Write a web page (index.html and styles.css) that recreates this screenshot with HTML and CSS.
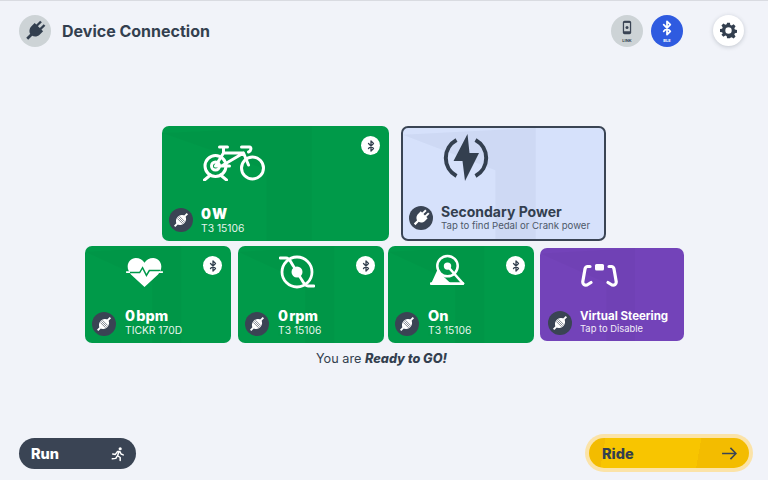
FILE: index.html
```html
<!DOCTYPE html>
<html lang="en">
<head>
<meta charset="utf-8">
<title>Device Connection</title>
<link rel="stylesheet" href="styles.css">
</head>
<body>
<svg class="defs" width="0" height="0" aria-hidden="true">
  <symbol id="bt" viewBox="0 0 24 24"><path d="M7 7l10 10-5 5V2l5 5L7 17" fill="none" stroke="currentColor" stroke-width="2.6" stroke-linejoin="round" stroke-linecap="round"/></symbol>
  <symbol id="plug" viewBox="0 0 24 24">
    <g transform="rotate(45 12 12)" fill="currentColor">
      <rect x="10.700" y="0" width="2.600" height="6"/>
      <rect x="10.700" y="18" width="2.600" height="6"/>
      <ellipse cx="12" cy="12" rx="6" ry="7.500"/>
      <path d="M7 10h10M7 12h10M7 14h10" stroke="#3a4454" stroke-width=".8"/>
    </g>
  </symbol>
  <symbol id="plug-open" viewBox="0 0 24 24">
    <g transform="rotate(45 12 12)" fill="currentColor">
      <rect x="8" y="0" width="2.600" height="7"/>
      <rect x="13.400" y="0" width="2.600" height="7"/>
      <path d="M5.500 6h13v5c0 4-3 6.500-5 6.800V24h-3v-6.200c-2-.3-5-2.800-5-6.800z"/>
    </g>
  </symbol>
</svg>

<header class="topbar">
  <div class="title-group">
    <span class="avatar grey"><svg class="i22 dark"><use href="#plug-open"/></svg></span>
    <h1 class="title">Device Connection</h1>
  </div>
  <div class="actions">
    <span class="mode grey">
      <svg class="phone" viewBox="0 0 12 18"><rect x="1" y="1" width="10" height="16" rx="2" fill="#3a4454"/><rect x="2.500" y="3.500" width="7" height="10" fill="#cdd3d6"/><circle cx="6" cy="9" r="1.800" fill="#3a4454"/></svg>
      <span class="mode-label dark">LINK</span>
    </span>
    <span class="mode blue">
      <svg class="i16 white"><use href="#bt"/></svg>
      <span class="mode-label white">BLE</span>
    </span>
    <span class="gear-btn">
      <svg class="gear" viewBox="0 0 24 24"><path fill="#333f4f" fill-rule="evenodd" d="M10 1h4l.6 3.200 1.900.8 2.700-1.800 2.800 2.800-1.800 2.700.8 1.900 3 .6v4l-3 .6-.8 1.900 1.800 2.700-2.800 2.800-2.700-1.800-1.900.8L14 23h-4l-.6-3.200-1.900-.8-2.700 1.800-2.800-2.800L3.800 16.300 3 14.400 0 14v-4l3-.6.800-1.900L2 4.800 4.800 2l2.700 1.800 1.900-.8zM12 7.500a4.500 4.500 0 1 0 0 9 4.500 4.500 0 0 0 0-9z"/></svg>
    </span>
  </div>
</header>

<main class="board">
  <div class="row row-top">
    <article class="card green wide">
      <span class="bt-badge"><svg class="i12"><use href="#bt"/></svg></span>
      <svg class="sensor bike" viewBox="0 0 64 36" fill="none" stroke="#fff" stroke-width="3" stroke-linecap="round" stroke-linejoin="round">
        <circle cx="14" cy="21" r="10.500"/><circle cx="14" cy="21" r="4"/>
        <circle cx="51" cy="23" r="11"/>
        <path d="M3 35l6-5M25 35l-6-5M14 21L22 8h20l5 12M20 21l22-13M14 21h14M18 2h8M22 2v6M40 2h8c2 0 2 4-1 5"/>
      </svg>
      <div class="status">
        <span class="plug-badge"><svg class="i18"><use href="#plug"/></svg></span>
        <div class="status-text"><strong class="value heavy">0W</strong><span class="sub">T3 15106</span></div>
      </div>
    </article>
    <article class="card pale">
      <svg class="sensor bolt" viewBox="0 0 48 48">
        <path d="M14.500 6A20.500 20.500 0 0 0 14.500 42M33.500 6A20.500 20.500 0 0 1 33.500 42" fill="none" stroke="#333f4f" stroke-width="4"/>
        <path d="M25.500 0L11.500 27h9L23 47 37 19h-9.500z" fill="#333f4f"/>
      </svg>
      <div class="status">
        <span class="plug-badge"><svg class="i18"><use href="#plug-open"/></svg></span>
        <div class="status-text"><strong class="value small ink">Secondary Power</strong><span class="sub ink-soft">Tap to find Pedal or Crank power</span></div>
      </div>
    </article>
  </div>
  <div class="row row-bottom">
    <article class="card green tile">
      <span class="bt-badge"><svg class="i12"><use href="#bt"/></svg></span>
      <svg class="sensor heart" viewBox="0 0 38 32">
        <path d="M19 31L5 18C-2 10 3 1 10 1c4 0 7 2 9 5 2-3 5-5 9-5 7 0 12 9 5 17z" fill="#fff"/>
        <path d="M3 16h11l3-5 4 8 3-5h11" fill="none" stroke="#00984a" stroke-width="1.500"/>
        <path d="M0 15.500h4M34 15.500h4" stroke="#fff" stroke-width="1.800"/>
      </svg>
      <div class="status">
        <span class="plug-badge"><svg class="i18"><use href="#plug"/></svg></span>
        <div class="status-text"><strong class="value">0 bpm</strong><span class="sub">TICKR 170D</span></div>
      </div>
    </article>
    <article class="card green tile">
      <span class="bt-badge"><svg class="i12"><use href="#bt"/></svg></span>
      <svg class="sensor cadence" viewBox="0 0 36 34" fill="none" stroke="#fff" stroke-width="2.800" stroke-linecap="round">
        <circle cx="18" cy="17" r="15"/>
        <path d="M1 3h6c4 0 5 5 8 9M35 31h-6c-4 0-5-5-8-9"/>
        <circle cx="18" cy="17" r="5.500" fill="#fff" stroke="none"/>
      </svg>
      <div class="status">
        <span class="plug-badge"><svg class="i18"><use href="#plug"/></svg></span>
        <div class="status-text"><strong class="value">0 rpm</strong><span class="sub">T3 15106</span></div>
      </div>
    </article>
    <article class="card green tile tile-near">
      <span class="bt-badge"><svg class="i12"><use href="#bt"/></svg></span>
      <svg class="sensor torque" viewBox="0 0 36 32">
        <path d="M1 30.500L8 15l5 7 9 8.500z" fill="#fff"/>
        <path d="M1 30h33" stroke="#fff" stroke-width="2.600" stroke-linecap="round"/>
        <circle cx="18" cy="12" r="10.500" fill="#009a49" stroke="#fff" stroke-width="2.600"/>
        <circle cx="18" cy="12" r="3.800" fill="#fff"/>
        <path d="M18 12l16 18" stroke="#fff" stroke-width="2.400" stroke-linecap="round"/>
      </svg>
      <div class="status">
        <span class="plug-badge"><svg class="i18"><use href="#plug"/></svg></span>
        <div class="status-text"><strong class="value">On</strong><span class="sub">T3 15106</span></div>
      </div>
    </article>
    <article class="card purple tile-short">
      <svg class="sensor steer" viewBox="0 0 37 23" fill="none" stroke="#fff" stroke-width="3.200" stroke-linecap="round" stroke-linejoin="round">
        <path d="M9 2.500H6.500C5 2.500 4.500 3 4 5L1.800 17.500C1.500 20.500 3.500 21.500 6 21l4-2.500"/>
        <path d="M28 2.500h2.500c1.500 0 2 .5 2.500 2.500l2.200 12.500c.3 3-1.700 4-4.200 3.500l-4-2.500"/>
        <rect x="14" y="0" width="9" height="6.500" rx="1.500" fill="#fff" stroke="none"/>
      </svg>
      <div class="status">
        <span class="plug-badge"><svg class="i18"><use href="#plug"/></svg></span>
        <div class="status-text"><strong class="value small">Virtual Steering</strong><span class="sub">Tap to Disable</span></div>
      </div>
    </article>
  </div>
  <p class="ready">You are <em>Ready to GO!</em></p>
</main>

<footer class="bottombar">
  <button class="pill run">
    <span>Run</span>
    <svg class="runner" viewBox="0 0 16 16"><circle cx="10.500" cy="2" r="1.800" fill="#fff"/><path d="M2 8l3 .5L7.500 5H10l1.500 3 2.500 1M9 5.500L7.500 10l3 2v3.500M7 10.500L5.500 13l-4 .5" fill="none" stroke="#fff" stroke-width="1.700" stroke-linecap="round" stroke-linejoin="round"/></svg>
  </button>
  <div class="ride-ring">
    <button class="pill ride">
      <span>Ride</span>
      <svg class="arrow" viewBox="0 0 16 14"><path d="M0 7h15M9 1l6 6-6 6" fill="none" stroke="#3a4454" stroke-width="1.700"/></svg>
    </button>
  </div>
</footer>
</body>
</html>
```

FILE: styles.css
```css
* { box-sizing: border-box; }
html, body { margin: 0; padding: 0; }
body {
  width: 768px;
  height: 480px;
  overflow: hidden;
  display: flex;
  flex-direction: column;
  background: #f1f3f9;
  border-top: 1px solid #d9dbe1;
  font-family: Inter, "Liberation Sans", sans-serif;
  color: #333f4f;
}
.defs { position: absolute; }
.i12 { width: 12px; height: 12px; display: block; }
.i16 { width: 16px; height: 16px; display: block; }
.i18 { width: 18px; height: 18px; display: block; color: #fff; }
.i22 { width: 22px; height: 22px; display: block; }
.dark { color: #333f4f; }
.white { color: #fff; }
.grey { background: #cdd3d6; }
.blue { background: #2f5be0; }

.topbar {
  height: 61px;
  padding: 14px 24px 0 19px;
  display: flex;
  justify-content: space-between;
  flex: none;
}
.title-group { display: flex; align-items: flex-start; gap: 11px; }
.avatar {
  width: 32px; height: 32px; border-radius: 50%;
  display: flex; align-items: center; justify-content: center;
}
.title { margin: 7px 0 0; font-size: 16px; line-height: 18px; font-weight: 700; }
.actions { display: flex; align-items: flex-start; }
.mode {
  width: 32px; height: 32px; border-radius: 50%; margin-right: 8px;
  display: flex; flex-direction: column; align-items: center; justify-content: center;
}
.mode.blue { margin-right: 30px; }
.phone { width: 10px; height: 17px; display: block; }
.mode-label { font-size: 4px; line-height: 5px; font-weight: 700; margin-top: 2px; }
.gear-btn {
  width: 31px; height: 31px; border-radius: 50%; background: #fff;
  box-shadow: 0 1px 4px rgba(51, 63, 79, .25);
  display: flex; align-items: center; justify-content: center;
}
.gear { width: 17px; height: 17px; display: block; }

.board { flex: 1; padding-top: 64px; }
.row { display: flex; }
.row-top { margin-left: 162px; gap: 12px; }
.row-bottom { margin: 5px 0 0 85px; align-items: center; gap: 7px; }

.card { position: relative; border-radius: 7px; overflow: hidden; }
.card::before {
  content: "";
  position: absolute;
  inset: 0;
  background: rgba(0, 0, 0, .02);
  clip-path: polygon(0 6%, 66% 0, 66% 100%, 46% 100%, 46% 38%);
}
.green { background: #009a49; }
.pale {
  background: #d6e1fb;
  border: 2px solid #3a4454;
  width: 205px; height: 115px;
}
.pale::before { background: rgba(60, 70, 110, .05); }
.purple { background: #7343b9; }
.wide { width: 227px; height: 115px; }
.tile { width: 146px; height: 97px; }
.tile-near { margin-left: -3px; }
.tile-short { width: 144px; height: 93px; margin-left: -1px; }

.bt-badge {
  position: absolute; top: 10px; right: 9px;
  width: 19px; height: 19px; border-radius: 50%;
  background: #fff; color: #333f4f;
  display: flex; align-items: center; justify-content: center;
}
.sensor { position: absolute; display: block; }
.bike { left: 39px; top: 19px; width: 65px; height: 36px; }
.bolt { left: 39px; top: 6px; width: 48px; height: 48px; }
.heart { left: 41px; top: 11px; width: 37px; height: 31px; }
.cadence { left: 41px; top: 9px; width: 36px; height: 34px; }
.torque { left: 42px; top: 8px; width: 35px; height: 32px; }
.steer { left: 41px; top: 16px; width: 37px; height: 23px; }

.status {
  position: absolute; left: 7px; right: 4px; bottom: 7px;
  display: flex; align-items: center; gap: 9px;
}
.wide .status { bottom: 9px; gap: 8px; }
.pale .status { left: 6px; bottom: 9px; gap: 8px; }
.purple .status { left: 8px; bottom: 6px; gap: 8px; }
.plug-badge {
  width: 24px; height: 24px; border-radius: 50%; flex: none;
  background: #3a4454;
  display: flex; align-items: center; justify-content: center;
}
.status-text { display: flex; flex-direction: column; color: #fff; margin-top: -5px; }
.value { font-size: 14.500px; line-height: 17px; font-weight: 800; word-spacing: -2px; }
.value.heavy { font-size: 14px; line-height: 17px; font-weight: 900; letter-spacing: 1px; }
.value.small { font-size: 11.500px; line-height: 14px; font-weight: 700; word-spacing: 0; }
.pale .value.small { font-size: 14px; line-height: 17px; }
.sub { font-size: 10.300px; line-height: 12px; opacity: .9; white-space: nowrap; }
.pale .sub { font-size: 9.600px; }
.purple .sub { font-size: 9.400px; }
.wide .status-text, .pale .status-text { margin-top: -3px; margin-bottom: -2px; }
.purple .status-text { margin-top: -2px; }
.ink { color: #333f4f; }
.ink-soft { color: #4d5869; opacity: 1; }

.ready { margin: 8px 0 0; padding-right: 5px; text-align: center; font-size: 12.700px; line-height: 15px; }
.ready em { font-weight: 800; }

.bottombar {
  flex: none;
  height: 42px;
  padding: 0 15px 0 19px;
  display: flex;
  justify-content: space-between;
  align-items: flex-start;
}
.pill {
  border: 0; border-radius: 16px; font: inherit; font-weight: 800; font-size: 14.500px;
  display: flex; align-items: center; justify-content: space-between;
}
.run { width: 117px; height: 31px; padding: 0 11px 0 12px; background: #3a4454; color: #fff; }
.runner { width: 14px; height: 16px; display: block; }
.ride-ring { padding: 4px; margin-top: -4px; border-radius: 20px; background: #fbe3a8; }
.ride {
  width: 160px; height: 30px; padding: 0 12px 0 13px;
  background: linear-gradient(100deg, #f3bc00 0, #f3bc00 10%, #f8c500 10%, #f8c500 68%, #f3bc00 68%);
  color: #333f4f;
}
.arrow { width: 15px; height: 13px; display: block; }
```
